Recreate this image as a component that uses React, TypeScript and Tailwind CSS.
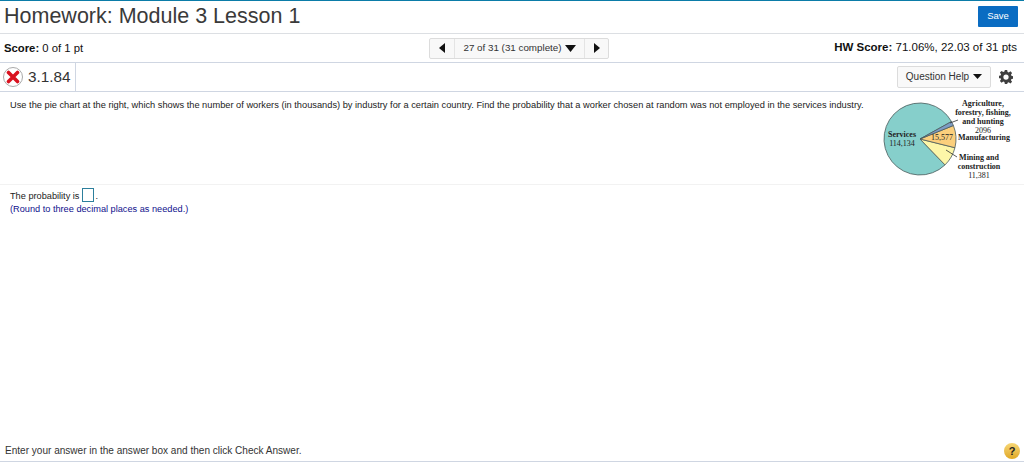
import React from "react";

const Caret = ({ dir, small }: { dir: "left" | "right" | "down"; small?: boolean }) => {
  const w = dir === "down" ? (small ? 9 : 11) : 6;
  const h = dir === "down" ? (small ? 5 : 7) : 10;
  const pts =
    dir === "left"
      ? `${w},0 ${w},${h} 0,${h / 2}`
      : dir === "right"
        ? `0,0 0,${h} ${w},${h / 2}`
        : `0,0 ${w},0 ${w / 2},${h}`;
  return (
    <svg width={w} height={h} viewBox={`0 0 ${w} ${h}`}>
      <polygon points={pts} fill="#111" />
    </svg>
  );
};

const polar = (deg: number, r: number) => {
  const a = (deg * Math.PI) / 180;
  return `${(37 + r * Math.cos(a)).toFixed(2)} ${(37 + r * Math.sin(a)).toFixed(2)}`;
};
const slice = (a: number, b: number, large = 0) => `M37 37 L${polar(a, 36)} A36 36 0 ${large} 1 ${polar(b, 36)} Z`;

const Pie = () => (
  <svg width="74" height="74" viewBox="0 0 74 74">
    <path d={slice(46, 331, 1)} fill="#86cfcb" stroke="#4a5a5a" strokeWidth="0.8" />
    <path d={slice(14, 46)} fill="#fdf6a8" stroke="#4a5a5a" strokeWidth="0.8" />
    <path d={slice(-22, 14)} fill="#fbcf7c" stroke="#4a5a5a" strokeWidth="0.8" />
    <path d={slice(-29, -22)} fill="#7d9cc4" stroke="#4a5a5a" strokeWidth="0.8" />
  </svg>
);

const PieChart = () => {
  const serif = "font-['Liberation_Serif',serif] text-[8px] leading-[9px] text-[#222] whitespace-nowrap";
  return (
    <div className="relative w-[128px] h-[85px] shrink-0">
      <div className="absolute left-[1px] top-[3px]">
        <Pie />
      </div>
      <svg width="128" height="85" className="absolute left-0 top-0">
        <line x1="68" y1="24" x2="76" y2="21" stroke="#333" strokeWidth="0.8" />
        <line x1="64" y1="51" x2="75" y2="58" stroke="#333" strokeWidth="0.8" />
      </svg>
      <div className={`absolute left-[2px] top-[31px] w-[36px] text-center ${serif}`}>
        <div className="font-bold">Services</div>
        <div>114,134</div>
      </div>
      <div className={`absolute left-[49px] top-[34px] ${serif}`}>15,577</div>
      <div className={`absolute left-[76px] top-[34px] font-bold ${serif}`}>Manufacturing</div>
      <div className={`absolute left-[73px] top-0 w-[56px] text-center font-bold ${serif}`}>
        <div>Agriculture,</div>
        <div>forestry, fishing,</div>
        <div>and hunting</div>
        <div className="font-normal">2096</div>
      </div>
      <div className={`absolute left-[74px] top-[54px] w-[46px] text-center font-bold ${serif}`}>
        <div>Mining and</div>
        <div>construction</div>
        <div className="font-normal">11,381</div>
      </div>
    </div>
  );
};

const Gear = () => (
  <svg width="14" height="14" viewBox="0 0 24 24" className="shrink-0">
    <path
      fill="#3f3f3f"
      fillRule="evenodd"
      d="M10 0h4l.7 3.4 2 .8L19.6 2.3l2.8 2.8-1.9 2.9.8 2 3.4.7v4l-3.4.7-.8 2 1.9 2.9-2.8 2.8-2.9-1.9-2 .8L14 24h-4l-.7-3.4-2-.8-2.9 1.9-2.8-2.8 1.9-2.9-.8-2L-.7 14v-4l3.4-.7.8-2L1.6 4.4l2.8-2.8 2.9 1.9 2-.8z M12 7.5a4.5 4.5 0 1 0 0 9 4.5 4.5 0 0 0 0-9z"
    />
  </svg>
);

export default function App() {
  return (
    <div className="w-[1024px] h-[462px] bg-white flex flex-col overflow-hidden font-['Liberation_Sans',Arial,sans-serif] text-[#222]">
      <header className="h-[34px] shrink-0 border-t border-t-[#0b7ca8] border-b border-b-[#dcdfe3] flex items-center justify-between pl-[4px] pr-[6px]">
        <h1 className="text-[21.500px] leading-none text-[#3a3a3a]">Homework: Module 3 Lesson 1</h1>
        <button className="w-[40px] h-[21px] mb-[1px] bg-[#0a6cc2] text-white text-[9.500px] flex items-center justify-center rounded-[1px]">Save</button>
      </header>

      <div className="h-[29px] shrink-0 border-b border-[#cfd6e2] grid grid-cols-[425px_180px_1fr] items-center pl-[4px] pr-[7px]">
        <div className="text-[11.300px] text-[#111]">
          <b>Score:</b> 0 of 1 pt
        </div>
        <div className="h-[21px] flex items-stretch border border-[#dcdcdc] rounded-[2px] bg-[#f8f8f8] text-[9.800px] text-[#333]">
          <div className="w-[25px] flex items-center justify-center border-r border-[#e4e4e4]">
            <Caret dir="left" />
          </div>
          <div className="w-[130px] flex items-center justify-center gap-[3px] border-r border-[#e4e4e4]">
            <span>27 of 31 (31 complete)</span>
            <Caret dir="down" />
          </div>
          <div className="flex-1 flex items-center justify-center">
            <Caret dir="right" />
          </div>
        </div>
        <div className="text-[11.500px] text-[#111] text-right">
          <b>HW Score:</b> 71.06%, 22.03 of 31 pts
        </div>
      </div>

      <div className="h-[29px] shrink-0 border-b border-[#cfd6e2] flex items-stretch justify-between pr-[11px]">
        <div className="w-[76px] border-r border-[#cfd6e2] flex items-center pl-[3px] gap-[5px]">
          <div className="w-[20px] h-[20px] rounded-full border border-[#aaa] bg-white flex items-center justify-center">
            <svg width="14" height="14" viewBox="0 0 14 14">
              <path d="M2.5 2.5 L11.5 11.5 M11.5 2.5 L2.5 11.5" stroke="#d9121f" strokeWidth="3.600" strokeLinecap="round" />
            </svg>
          </div>
          <span className="text-[15.300px] text-[#333]">3.1.84</span>
        </div>
        <div className="flex items-center gap-[8px]">
          <div className="w-[94px] h-[22px] mb-[1px] border border-[#dcdcdc] rounded-[2px] bg-[#f9f9f9] text-[10px] text-[#333] flex items-center justify-center gap-[4px]">
            <span>Question Help</span>
            <Caret dir="down" small />
          </div>
          <Gear />
        </div>
      </div>

      <div className="h-[93px] shrink-0 border-b border-[#f2f2f2] flex justify-between pl-[10px] pr-[14px]">
        <p className="text-[9.280px] leading-[11px] pt-[8px] text-[#222]">
          Use the pie chart at the right, which shows the number of workers (in thousands) by industry for a certain country. Find the probability that a worker chosen at random was not employed in the services industry.
        </p>
        <div className="pt-[7px]">
          <PieChart />
        </div>
      </div>

      <div className="flex-1 pl-[10px] pt-[2px]">
        <div className="flex items-center text-[9.200px] leading-[14px] text-[#222]">
          <span className="pt-[2px]">The probability is</span>
          <span className="inline-block w-[12px] h-[14px] ml-[3px] mr-[1px] border border-[#2d7f9c] bg-white" />
          <span className="pt-[2px]">.</span>
        </div>
        <div className="text-[9.200px] leading-[12px] text-[#10108c]">(Round to three decimal places as needed.)</div>
      </div>

      <footer className="h-[29px] shrink-0 border-b border-[#cfd6e2] flex items-center justify-between pl-[5px] pr-[4px] pt-[8px]">
        <span className="text-[10.050px] text-[#333]">Enter your answer in the answer box and then click Check Answer.</span>
        <div className="w-[16px] h-[16px] rounded-full bg-gradient-to-b from-[#f7d774] to-[#e0a81e] text-[#222] text-[11px] font-bold flex items-center justify-center">?</div>
      </footer>
    </div>
  );
}
